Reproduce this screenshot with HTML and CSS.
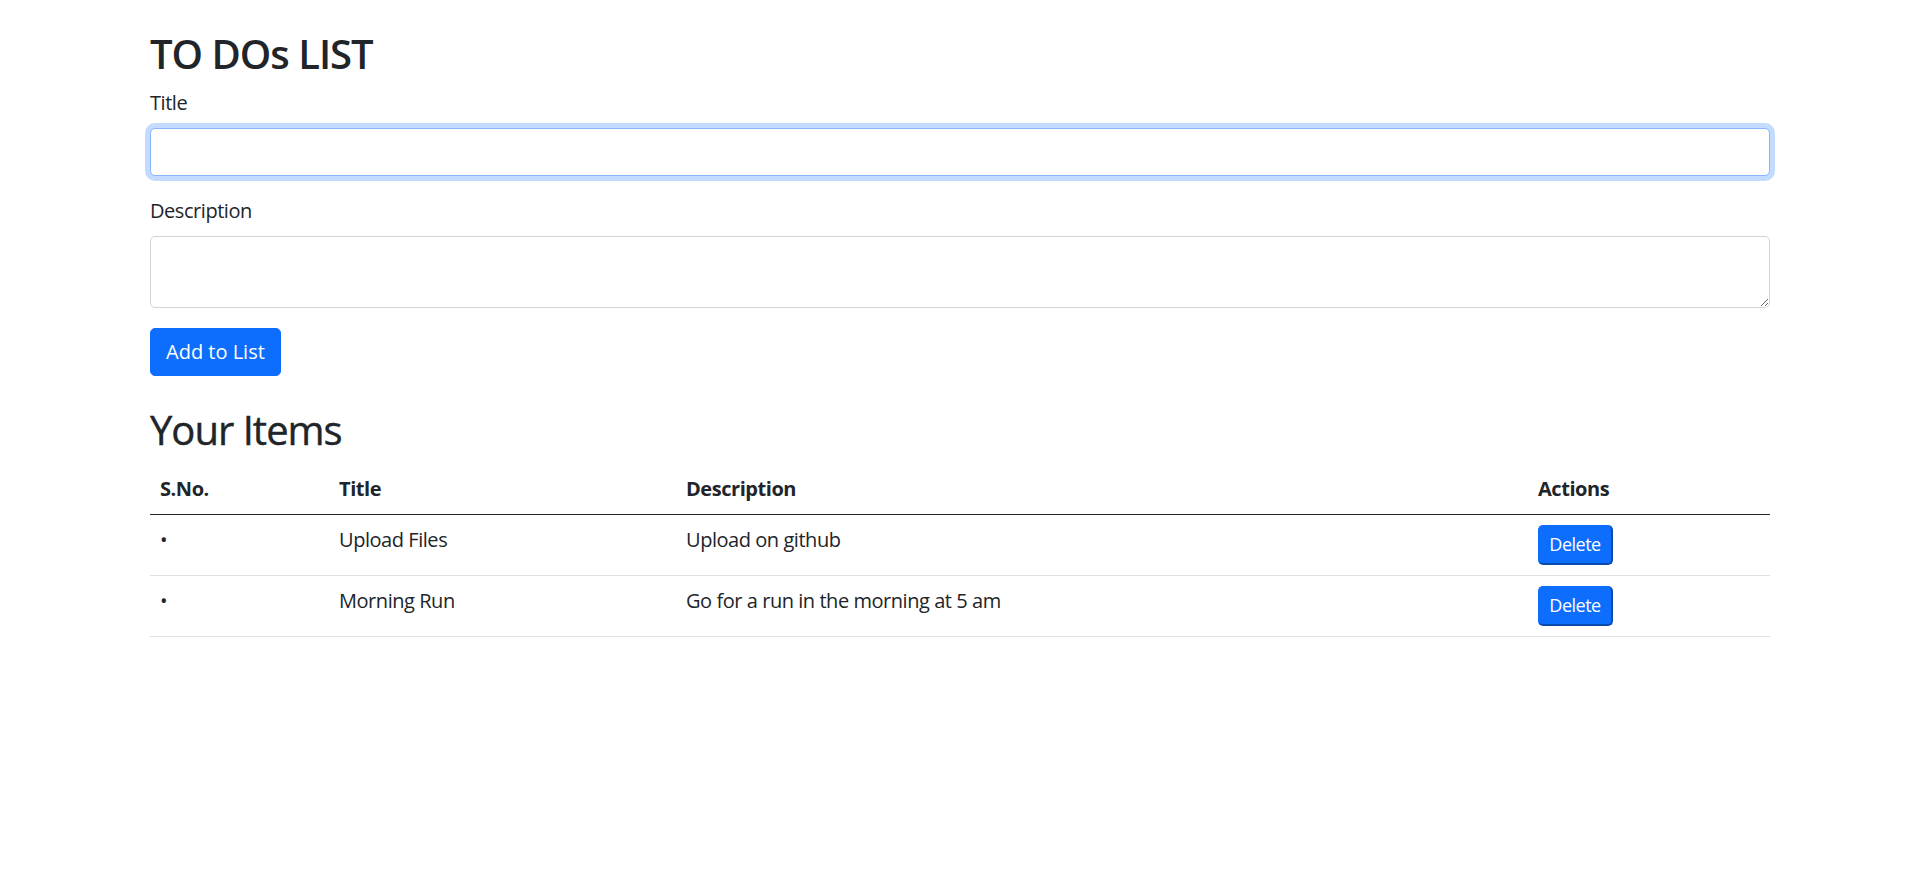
FILE: index.html
```html
<!DOCTYPE html>
<html lang="en">
<head>
<meta charset="utf-8">
<title>TO DOs LIST</title>
<link rel="stylesheet" href="styles.css">
</head>
<body>
<div class="container">
  <h2 class="heading heading-main">TO DOs LIST</h2>
  <form class="todo-form">
    <div class="field">
      <label class="label" for="title">Title</label>
      <input class="control control-focus" id="title" type="text">
    </div>
    <div class="field">
      <label class="label" for="desc">Description</label>
      <textarea class="control control-area" id="desc"></textarea>
    </div>
    <button type="button" class="btn-primary">Add to List</button>
  </form>
  <h2 class="heading heading-items">Your Items</h2>
  <table class="items-table">
    <colgroup>
      <col class="col-sno">
      <col class="col-title">
      <col class="col-desc">
      <col class="col-actions">
    </colgroup>
    <thead>
      <tr><th>S.No.</th><th>Title</th><th>Description</th><th>Actions</th></tr>
    </thead>
    <tbody>
      <tr>
        <td>•</td>
        <td>Upload Files</td>
        <td>Upload on github</td>
        <td><button type="button" class="btn-delete">Delete</button></td>
      </tr>
      <tr>
        <td>•</td>
        <td>Morning Run</td>
        <td>Go for a run in the morning at 5 am</td>
        <td><button type="button" class="btn-delete">Delete</button></td>
      </tr>
    </tbody>
  </table>
</div>
</body>
</html>
```
FILE: styles.css
```css
* { box-sizing: border-box; }

body {
  margin: 0;
  background: #fff;
  color: #212529;
  font-family: "Open Sans", "Noto Sans", "Liberation Sans", sans-serif;
  font-size: 20px;
  line-height: 1.5;
  letter-spacing: -0.45px;
}

.container {
  width: 1620px;
  margin: 30px auto;
}

.heading {
  margin: 0 0 10px;
  font-size: 40px;
  line-height: 48px;
  font-weight: 500;
  letter-spacing: -1px;
}

.heading-main { font-weight: 600; }

.heading-items {
  margin-top: 30px;
  -webkit-text-stroke: 0.4px #212529;
}

.field { margin-bottom: 20px; }

.label {
  display: block;
  margin-bottom: 10px;
  line-height: 30px;
}

.control {
  display: block;
  width: 100%;
  height: 48px;
  padding: 7px 15px;
  border: 1px solid #ced4da;
  border-radius: 5px;
  background: #fff;
  color: #212529;
  font: inherit;
  outline: 0;
}

.control-focus {
  border-color: #86b7fe;
  box-shadow: 0 0 0 5px rgba(13, 110, 253, 0.25);
}

.control-area {
  height: 72px;
  resize: vertical;
}

.btn-primary {
  display: inline-block;
  height: 48px;
  padding: 7px 15px;
  border: 1px solid #0d6efd;
  border-radius: 5px;
  background: #0d6efd;
  color: #fff;
  font: inherit;
  line-height: 30px;
  cursor: pointer;
}

.items-table {
  width: 100%;
  border-collapse: collapse;
  table-layout: fixed;
}

.col-sno { width: 179px; }
.col-title { width: 347px; }
.col-desc { width: 852px; }
.col-actions { width: 242px; }

.items-table th,
.items-table td {
  padding: 10px;
  text-align: left;
  vertical-align: top;
  line-height: 30px;
}

.items-table th {
  font-weight: 700;
  border-bottom: 1px solid #212529;
}

.items-table td {
  border-bottom: 1px solid #dee2e6;
}

.btn-delete {
  display: inline-block;
  vertical-align: top;
  width: 75px;
  height: 40px;
  padding: 0;
  border-style: solid;
  border-width: 1px 2px 2px 1px;
  border-color: #0d6efd #0a4bb0 #0a4bb0 #0d6efd;
  border-radius: 5px;
  background: #0d6efd;
  color: #fff;
  font-family: "Open Sans", "Noto Sans", sans-serif;
  font-size: 18px;
  letter-spacing: -0.5px;
  line-height: 37px;
  text-align: center;
  cursor: pointer;
}
```
